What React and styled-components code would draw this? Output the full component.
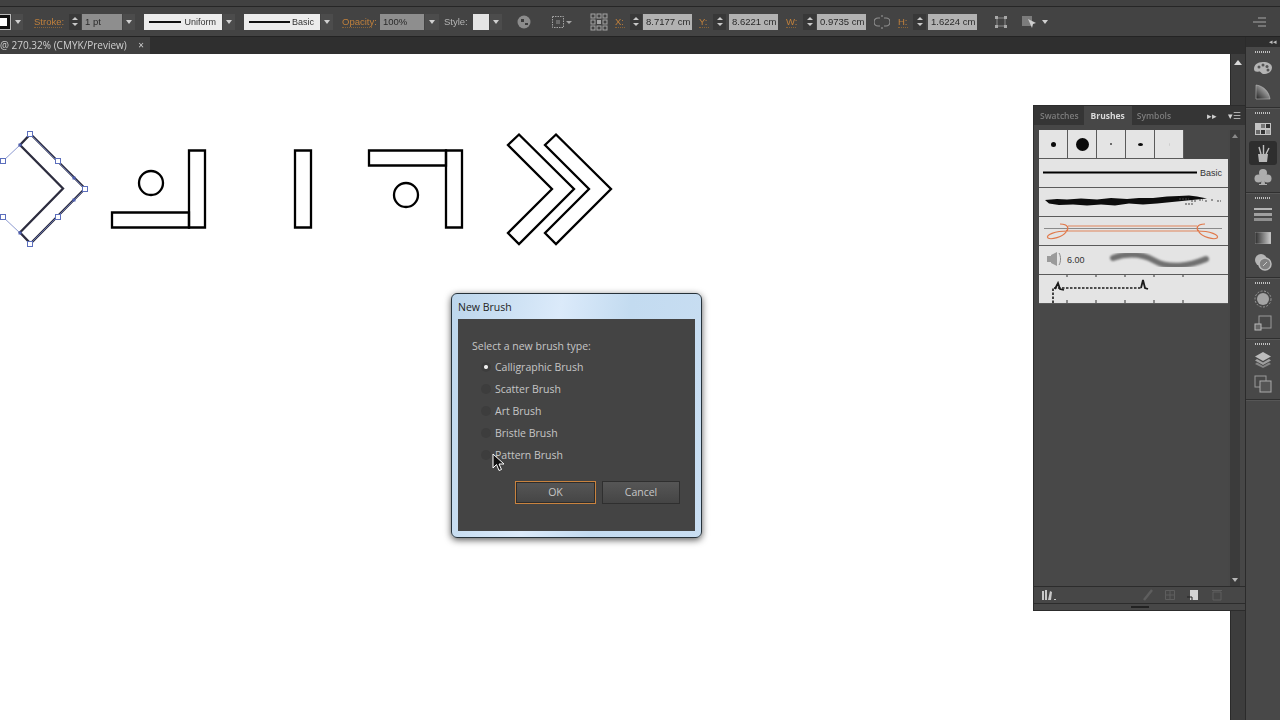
import React from 'react';
import styled, { createGlobalStyle } from 'styled-components';

const GlobalStyle = createGlobalStyle`
	html, body {
		margin: 0;
		padding: 0;
		background: #fff;
	}
	body {
		font-family: "Open Sans", "Liberation Sans", sans-serif;
		overflow: hidden;
	}
`;

const Page = styled.div`
	position: relative;
	width: 1280px;
	height: 720px;
	overflow: hidden;
	display: flex;
	flex-direction: column;
`;

const TopStrip = styled.div`
	height: 6px;
	background: #414141;
	border-bottom: 1px solid #262626;
	filter: blur(0.4px);
`;

const ControlBar = styled.div`
	height: 29px;
	display: flex;
	align-items: center;
	background: #434343;
	border-bottom: 1px solid #232323;
	filter: blur(0.5px);
`;

const Label = styled.span`
	width: ${p => p.$w}px;
	margin-left: ${p => p.$ml}px;
	color: ${p => p.$plain ? '#b5b5b5' : '#c0803c'};
	font-family: "Liberation Sans", sans-serif;
	font-size: 9.5px;
	white-space: nowrap;
	border-bottom: ${p => p.$plain ? 'none' : '1px dotted #8a6336'};
	line-height: 11px;
`;

const Field = styled.div`
	width: ${p => p.$w}px;
	margin-left: ${p => p.$ml}px;
	height: 16px;
	line-height: 16px;
	padding-left: 3px;
	box-sizing: border-box;
	font-family: "Liberation Sans", sans-serif;
	font-size: 9.5px;
	color: #2a2a2a;
	white-space: nowrap;
	background: ${p => p.$light ? '#b2b2b2' : '#8e8e8e'};
`;

const Spinner = styled.div`
	width: ${p => p.$w || 12}px;
	margin-left: ${p => p.$ml}px;
	height: 16px;
	background: #383838;
	display: flex;
	flex-direction: column;
	align-items: center;
	justify-content: space-evenly;

	&::before, &::after {
		content: "";
		border-left: 3px solid transparent;
		border-right: 3px solid transparent;
	}
	&::before { border-bottom: 3px solid #c8c8c8; }
	&::after { border-top: 3px solid #c8c8c8; }
`;

const Drop = styled.div`
	width: ${p => p.$w || 12}px;
	margin-left: ${p => p.$ml}px;
	height: 16px;
	background: ${p => p.$bare ? 'transparent' : '#4c4c4c'};
	display: flex;
	align-items: center;
	justify-content: center;

	&::after {
		content: "";
		border-left: 3px solid transparent;
		border-right: 3px solid transparent;
		border-top: 4px solid #d0d0d0;
	}
`;

const FillSwatch = styled.div`
	width: 10px;
	height: 14px;
	box-sizing: border-box;
	background: #fff;
	border: 3px solid #111;
	border-left: 0;
	outline: 1px solid #bbb;
`;

const StrokePicker = styled.div`
	width: ${p => p.$w}px;
	margin-left: ${p => p.$ml}px;
	height: 16px;
	box-sizing: border-box;
	padding: 0 6px 0 5px;
	background: #ececec;
	display: flex;
	align-items: center;
	justify-content: space-between;
	font-family: "Liberation Sans", sans-serif;
	font-size: 9px;
	color: #333;

	&::before {
		content: "";
		width: ${p => p.$line}px;
		height: 2px;
		background: #111;
	}
`;

const StyleSwatch = styled.div`
	width: 16px;
	height: 16px;
	margin-left: ${p => p.$ml}px;
	background: #e4e4e4;
`;

const BarIcon = styled.svg`
	flex: none;
	margin-left: ${p => p.$ml}px;
`;

const MenuIcon = styled.svg`
	margin-left: auto;
	margin-right: 14px;
`;

const Workspace = styled.div`
	flex: 1;
	display: flex;
	min-height: 0;
`;

const DocColumn = styled.div`
	flex: 1;
	display: flex;
	flex-direction: column;
`;

const TabBar = styled.div`
	height: 17px;
	background: #2f2f2f;
	display: flex;
	filter: blur(0.3px);
`;

const DocTab = styled.div`
	width: 150px;
	background: #404040;
	color: #cfcfcf;
	font-size: 10px;
	line-height: 17px;
	display: flex;
	justify-content: space-between;
	padding-right: 6px;
	box-sizing: border-box;
	white-space: nowrap;
`;

const CanvasRow = styled.div`
	flex: 1;
	display: flex;
	min-height: 0;
`;

const Canvas = styled.div`
	flex: 1;
	background: #fff;
	padding-top: 71px;
`;

const Artwork = styled.svg`
	display: block;
	filter: blur(0.25px);
`;

const PageScroll = styled.div`
	width: 15px;
	background: #3d3d3d;
	border-left: 1px solid #2a2a2a;
	box-sizing: border-box;
	display: flex;
	justify-content: center;
	padding-top: 6px;

	&::before {
		content: "";
		height: 0;
		border-left: 4px solid transparent;
		border-right: 4px solid transparent;
		border-bottom: 5px solid #d8d8d8;
	}
`;

const Dock = styled.div`
	width: 35px;
	background: #484848;
	border-left: 1px solid #2b2b2b;
	box-sizing: border-box;
	filter: blur(0.4px);
`;

const DockHead = styled.div`
	height: 10px;
	background: #2f2f2f;
	color: #bdbdbd;
	font-size: 7px;
	line-height: 10px;
	text-align: right;
	padding-right: 3px;
`;

const DockSection = styled.div`
	padding: 4px 0 3px;
	border-bottom: 1px solid #2f2f2f;
	box-shadow: 0 1px 0 #565656;
`;

const Grip = styled.div`
	width: 16px;
	height: 2px;
	margin: 0 auto 3px;
	background: repeating-linear-gradient(90deg, #c0c0c0 0 1px, transparent 1px 2px);
`;

const DockSlot = styled.div`
	height: 24px;
	display: flex;
	align-items: center;
	justify-content: center;
	margin: 0 3px;
	border-radius: 3px;
	background: ${p => p.$on ? '#2e2e2e' : 'transparent'};
`;

const Panel = styled.div`
	position: absolute;
	left: 1033px;
	top: 105px;
	width: 212px;
	height: 506px;
	display: flex;
	flex-direction: column;
	background: #474747;
	border: 1px solid #2c2c2c;
	border-right: 0;
	box-sizing: border-box;
`;

const PanelHead = styled.div`
	height: 19px;
	flex: none;
	background: #353535;
	display: flex;
	align-items: stretch;
	padding-left: 1px;
	font-size: 8.5px;
	line-height: 19px;
	filter: blur(0.3px);
`;

const PanelTab = styled.div`
	padding: 0 ${p => p.$on ? 7 : 5}px;
	color: ${p => p.$on ? '#dadada' : '#7d7d7d'};
	font-weight: ${p => p.$on ? 700 : 600};
	background: ${p => p.$on ? '#474747' : 'transparent'};
	white-space: nowrap;
`;

const PanelMenu = styled.div`
	margin-left: auto;
	display: flex;
	align-items: center;
	gap: 11px;
	padding-right: 4px;
	color: #d0d0d0;
	font-size: 9px;
`;

const PanelBody = styled.div`
	flex: 1;
	display: flex;
	padding: 5px 5px 0;
	min-height: 0;
	border-bottom: 1px solid #2c2c2c;
`;

const BrushList = styled.div`
	width: 189px;
	background: #484848;
`;

const ThumbRow = styled.div`
	display: flex;
	height: 29px;
`;

const Thumb = styled.div`
	width: 29px;
	box-sizing: border-box;
	background: #e4e4e4;
	border-right: 1px solid #5a5a5a;
	border-bottom: 1px solid #5a5a5a;
	display: flex;
	align-items: center;
	justify-content: center;

	&::after {
		content: "";
		width: ${p => p.$w}px;
		height: ${p => p.$h}px;
		border-radius: 50%;
		background: ${p => p.$c || '#0a0a0a'};
	}
`;

const BrushRow = styled.div`
	position: relative;
	height: 29px;
	box-sizing: border-box;
	background: #e4e4e4;
	border-bottom: 1px solid #5a5a5a;
	color: #333;
	font-family: "Liberation Sans", sans-serif;
	font-size: 9px;
	line-height: 28px;
`;

const RowArt = styled.svg`
	display: block;
`;

const BasicName = styled.span`
	position: absolute;
	right: 6px;
	top: 0;
`;

const SizeName = styled.span`
	position: absolute;
	left: 28px;
	top: 0;
`;

const ListScroll = styled.div`
	width: 10px;
	margin-left: 2px;
	background: #3b3b3b;
	display: flex;
	flex-direction: column;
	align-items: center;
	justify-content: space-between;
	padding: 4px 0;
	box-sizing: border-box;

	&::before, &::after {
		content: "";
		border-left: 3px solid transparent;
		border-right: 3px solid transparent;
	}
	&::before { border-bottom: 4px solid #8a8a8a; }
	&::after { border-top: 4px solid #b8b8b8; }
`;

const PanelFoot = styled.div`
	height: 16px;
	flex: none;
	display: flex;
	align-items: center;
	padding: 0 7px;
	border-bottom: 1px solid #2c2c2c;
`;

const FootIcon = styled.svg`
	margin-left: ${p => p.$ml}px;
	flex: none;
`;

const ResizeBar = styled.div`
	height: 6px;
	flex: none;
	display: flex;
	align-items: center;
	justify-content: center;

	&::after {
		content: "";
		width: 18px;
		height: 2px;
		background: #222;
	}
`;

const Dialog = styled.div`
	position: absolute;
	left: 451px;
	top: 293px;
	width: 251px;
	height: 245px;
	box-sizing: border-box;
	padding: 0 6px 6px;
	display: flex;
	flex-direction: column;
	border: 1px solid #26323a;
	border-radius: 6px;
	background: linear-gradient(100deg, #bcd6ec 0%, #dbeafa 38%, #c3dbf0 62%, #c9def2 100%);
	box-shadow: 0 2px 7px rgba(0, 0, 0, 0.65);
`;

const DialogTitle = styled.div`
	height: 25px;
	line-height: 26px;
	font-size: 10.5px;
	color: #1d1d1d;
	flex: none;
`;

const DialogBody = styled.div`
	flex: 1;
	background: #444;
	color: #c6c6c6;
	font-size: 10.5px;
	padding-top: 20px;
	display: flex;
	flex-direction: column;
`;

const Prompt = styled.div`
	margin-left: 14px;
	height: 14px;
	line-height: 14px;
	margin-bottom: 3px;
`;

const RadioRow = styled.div`
	height: 22px;
	display: flex;
	align-items: center;
	gap: 4px;
	padding-left: 23px;
`;

const Radio = styled.span`
	width: 10px;
	height: 10px;
	border-radius: 50%;
	background: ${p => p.$on ? 'radial-gradient(circle, #eee 0 1.5px, #3d3d3d 2.5px)' : '#3d3d3d'};
`;

const ButtonRow = styled.div`
	display: flex;
	justify-content: flex-end;
	gap: 6px;
	padding-right: 15px;
	margin-top: 15px;
`;

const DialogButton = styled.div`
	width: ${p => p.$w}px;
	height: 23px;
	box-sizing: border-box;
	line-height: 21px;
	text-align: center;
	color: #c6c6c6;
	background: linear-gradient(#565656, #454545);
	border: 1px solid ${p => p.$primary ? '#c9833f' : '#2f2f2f'};
	box-shadow: ${p => p.$primary ? 'inset 0 0 0 1px #2c2c2c' : 'none'};
`;

const Cursor = styled.svg`
	position: absolute;
	left: 40px;
	top: 159px;
`;

const barDot = '#a4a4a4';

const dockSections = [
	['palette', 'curve'],
	['swatches', 'brushes', 'club'],
	['lines', 'gradient', 'rings'],
	['halo', 'frames'],
	['layers', 'copies'],
];

const brushTypes = ['Calligraphic Brush', 'Scatter Brush', 'Art Brush', 'Bristle Brush', 'Pattern Brush'];

function DockGlyph({ name }) {
	switch (name) {
		case 'palette':
			return (
				<svg width="20" height="16" viewBox="0 0 20 16">
					<path d="M10 2C4 2 1 5 1 9c0 3 3 3 5 2.5 2-.5 2 3 6 2.500 4-.5 7-3 7-6.500C19 4 15 2 10 2z" fill="#b4b4b4" />
					<circle cx="6" cy="7" r="1.5" fill="#555" />
					<circle cx="10" cy="5" r="1.5" fill="#555" />
					<circle cx="14" cy="6.5" r="1.5" fill="#555" />
					<circle cx="15" cy="10" r="1.5" fill="#555" />
				</svg>
			);
		case 'curve':
			return (
				<svg width="18" height="18" viewBox="0 0 18 18">
					<defs>
						<linearGradient id="curveFill" x1="0" y1="1" x2="1" y2="0">
							<stop offset="0" stopColor="#222" />
							<stop offset="1" stopColor="#ddd" />
						</linearGradient>
					</defs>
					<path d="M2 2C10 3 15 9 16 16H2z" fill="url(#curveFill)" stroke="#bbb" strokeWidth=".6" />
				</svg>
			);
		case 'swatches':
			return (
				<svg width="16" height="12" viewBox="0 0 16 12">
					<rect width="16" height="12" fill="#c4c4c4" />
					<rect x="6" y="1" width="4" height="4" fill="#777" />
					<rect x="11" y="1" width="4" height="4" fill="#333" />
					<rect x="1" y="7" width="4" height="4" fill="#666" />
					<rect x="6" y="7" width="4" height="4" fill="#333" />
					<rect x="11" y="7" width="4" height="4" fill="#999" />
				</svg>
			);
		case 'brushes':
			return (
				<svg width="18" height="20" viewBox="0 0 18 20">
					<path d="M4 11h10l-1 8H5z" fill="#b8b8b8" />
					<path d="M7 11 5 4M9.500 11V2M12 11l3-6" stroke="#c0c0c0" strokeWidth="1.400" fill="none" />
				</svg>
			);
		case 'club':
			return (
				<svg width="18" height="18" viewBox="0 0 18 18">
					<circle cx="9" cy="5" r="4" fill="#adadad" />
					<circle cx="4.5" cy="10.5" r="4" fill="#adadad" />
					<circle cx="13.5" cy="10.5" r="4" fill="#adadad" />
					<path d="M8 8h2l1 8h2v1H5v-1h2z" fill="#adadad" />
				</svg>
			);
		case 'lines':
			return (
				<svg width="18" height="13" viewBox="0 0 18 13">
					<rect y="0" width="18" height="2" fill="#b4b4b4" />
					<rect y="5" width="18" height="3" fill="#a0a0a0" />
					<rect y="10" width="18" height="3" fill="#909090" />
				</svg>
			);
		case 'gradient':
			return (
				<svg width="16" height="12" viewBox="0 0 16 12">
					<defs>
						<linearGradient id="barFill">
							<stop offset="0" stopColor="#2c2c2c" />
							<stop offset="1" stopColor="#d0d0d0" />
						</linearGradient>
					</defs>
					<rect width="16" height="12" fill="url(#barFill)" stroke="#aaa" strokeWidth=".6" />
				</svg>
			);
		case 'rings':
			return (
				<svg width="18" height="18" viewBox="0 0 18 18">
					<circle cx="7" cy="7" r="6" fill="#b4b4b4" />
					<circle cx="11" cy="11" r="6" fill="#808080" stroke="#bbb" strokeWidth="1.5" />
					<path d="M9 13l4-4" stroke="#ccc" strokeWidth="1" />
				</svg>
			);
		case 'halo':
			return (
				<svg width="18" height="18" viewBox="0 0 18 18">
					<circle cx="9" cy="9" r="6" fill="#a4a4a4" />
					<circle cx="9" cy="9" r="8" fill="none" stroke="#999" strokeWidth="1" strokeDasharray="2 1.5" />
				</svg>
			);
		case 'frames':
			return (
				<svg width="18" height="18" viewBox="0 0 18 18">
					<rect x="5" y="2" width="12" height="12" fill="none" stroke="#999" />
					<rect x="1" y="10" width="6" height="6" fill="#666" stroke="#bbb" />
				</svg>
			);
		case 'layers':
			return (
				<svg width="18" height="16" viewBox="0 0 18 16">
					<path d="M9 0l8 4.5-8 4.5-8-4.500z" fill="#bcbcbc" />
					<path d="M3 7l6 3.5L15 7l2 1.5L9 13 1 8.500z" fill="#a0a0a0" />
					<path d="M3 10.500l6 3.5 6-3.500 2 1.5-8 4-8-4z" fill="#858585" />
				</svg>
			);
		case 'copies':
			return (
				<svg width="18" height="18" viewBox="0 0 18 18">
					<rect x="1" y="1" width="11" height="11" fill="none" stroke="#999" />
					<rect x="6" y="6" width="11" height="11" fill="#555" stroke="#aaa" />
				</svg>
			);
		default:
			return null;
	}
}

function ShapeArt() {
	const handles = [[30, 134], [85, 189], [30, 244], [3, 161], [3, 217], [58, 161], [58, 217]];
	const nodes = [[20, 145], [20, 233], [74, 178], [74, 200]];
	return (
		<Artwork width="640" height="125" viewBox="0 125 640 125">
			<g fill="none" stroke="#000" strokeWidth="2.3">
				<path d="M112 212.500h77v15h-77z" />
				<path d="M189 150.500h16v77h-16z" />
				<circle cx="151" cy="183" r="12" />
				<path d="M295 150.500h16v77h-16z" />
				<path d="M369 150.500h77v15h-77z" />
				<path d="M446 150.500h16v77h-16z" />
				<circle cx="406" cy="195" r="12" />
				<path d="M519 134.500 574 189 519 244 508 233 552 189 508 145z" />
				<path d="M556 134.500 611 189 556 244 545 233 589 189 545 145z" />
			</g>
			<path d="M30.500 134 85 188.500 30.500 243.500 20 232.500 63 188.500 20 145z" fill="none" stroke="#2d2d3f" strokeWidth="2.3" />
			<g stroke="#6f7fc4" strokeWidth="1" fill="none">
				<path d="M20 145 3 161M20 233 3 217M30 134 85 189 30 244" opacity=".8" />
			</g>
			{handles.map(([x, y]) => (
				<rect key={`${x}-${y}`} x={x - 2.5} y={y - 2.5} width="5" height="5" fill="#fff" stroke="#5c6fbd" />
			))}
			{nodes.map(([x, y]) => (
				<rect key={`${x}-${y}`} x={x - 1.5} y={y - 1.5} width="3" height="3" fill="#4e5fb0" />
			))}
		</Artwork>
	);
}

function CharcoalBrush() {
	return (
		<RowArt width="188" height="28" viewBox="0 0 188 28">
			<path d="M6 12l12-1 10 .5 14-1 16 1 14-1.5 16 1 12-1 14 0 14-1.5 12-.5 10-.5 8 1 10 2-10 1-10 1-10 1-10 1-10 1-14 1-14-1-14 2-14-1-14 1-14-1-14 .5-10-1.500z" fill="#0c0c0c" />
			<path d="M140 11h10M152 13h6M146 16h8M160 12h4M166 13h3M172 12h2M178 13h4" stroke="#444" strokeWidth="1.2" strokeDasharray="2 1" />
		</RowArt>
	);
}

function ArtBrush() {
	return (
		<RowArt width="188" height="28" viewBox="0 0 188 28">
			<path d="M5 11.500h178" stroke="#8a8a8a" strokeWidth="1" />
			<path d="M29 9h129M29 14h129" stroke="#e0845a" strokeWidth="1.2" />
			<path d="M21 7c9 0 9 5 6 8-3 5-15 8-18 6-3-3 7-7 20-7" fill="none" stroke="#e0784a" strokeWidth="1.2" />
			<path d="M166 7c-9 0-9 5-6 8 3 5 15 8 18 6 3-3-7-7-20-7" fill="none" stroke="#e0784a" strokeWidth="1.2" />
		</RowArt>
	);
}

function BristleBrush() {
	return (
		<RowArt width="188" height="28" viewBox="0 0 188 28">
			<defs>
				<filter id="soft"><feGaussianBlur stdDeviation="1.3" /></filter>
			</defs>
			<path d="M12 9l6-3v14l-6-3zM8 10h4v6H8z" fill="#9a9a9a" />
			<path d="M20 7c2 3 2 9 0 12" fill="none" stroke="#888" />
			<path d="M74 12C88 7 102 7 116 15S150 20 167 13" fill="none" stroke="#6f6f6f" strokeWidth="6" strokeLinecap="round" filter="url(#soft)" />
		</RowArt>
	);
}

function PatternBrush() {
	const ticks = [28, 57, 86, 115, 144];
	return (
		<RowArt width="188" height="28" viewBox="0 0 188 28">
			{ticks.map(x => (
				<path key={x} d={`M${x} 0v2M${x} 25v3`} stroke="#333" strokeWidth="1" />
			))}
			<path d="M14 28V13h88" fill="none" stroke="#1a1a1a" strokeWidth="1.6" strokeDasharray="2.5 1.5" />
			<path d="M16 14l3-6 2 6 4 1M102 13l2-8 2 8 3 1" fill="none" stroke="#1a1a1a" strokeWidth="1.8" />
		</RowArt>
	);
}

function App() {
	return (
		<Page>
			<GlobalStyle />
			<TopStrip />
			<ControlBar>
				<FillSwatch />
				<Drop $w={11} $ml={2} />
				<Label $w={28} $ml={11}>Stroke:</Label>
				<Spinner $ml={7} />
				<Field $w={40} $ml={1}>1 pt</Field>
				<Drop $ml={1} />
				<StrokePicker $w={78} $ml={9} $line={32}>Uniform</StrokePicker>
				<Drop $ml={1} />
				<StrokePicker $w={76} $ml={9} $line={41}>Basic</StrokePicker>
				<Drop $ml={1} />
				<Label $w={30} $ml={9}>Opacity:</Label>
				<Field $w={44} $ml={8}>100%</Field>
				<Drop $w={14} $ml={1} />
				<Label $w={21} $ml={5} $plain>Style:</Label>
				<StyleSwatch $ml={8} />
				<Drop $ml={1} />
				<BarIcon $ml={14} width="16" height="16" viewBox="0 0 16 16">
					<circle cx="8" cy="8" r="6.5" fill="#8c8c8c" />
					<path d="M5 5h3v3H5zM9 9h3v2H9z" fill="#3c3c3c" />
				</BarIcon>
				<BarIcon $ml={20} width="20" height="16" viewBox="0 0 20 16">
					<rect x=".5" y="2.5" width="11" height="11" fill="none" stroke={barDot} strokeDasharray="1.5 1" />
					<rect x="4" y="6" width="4" height="4" fill="#6a6a6a" />
					<path d="M14 7h6l-3 3z" fill={barDot} />
				</BarIcon>
				<BarIcon $ml={18} width="18" height="18" viewBox="0 0 18 18">
					<g fill="none" stroke={barDot}>
						<rect x="1" y="1" width="4" height="4" />
						<rect x="7" y="1" width="4" height="4" />
						<rect x="13" y="1" width="4" height="4" />
						<rect x="1" y="7" width="4" height="4" />
						<rect x="13" y="7" width="4" height="4" />
						<rect x="1" y="13" width="4" height="4" />
						<rect x="7" y="13" width="4" height="4" />
						<rect x="13" y="13" width="4" height="4" />
					</g>
					<rect x="7" y="7" width="4" height="4" fill={barDot} />
				</BarIcon>
				<Label $w={10} $ml={7}>X:</Label>
				<Spinner $ml={5} />
				<Field $w={49} $ml={1} $light>8.7177 cm</Field>
				<Label $w={10} $ml={7}>Y:</Label>
				<Spinner $w={13} $ml={4} />
				<Field $w={49} $ml={3} $light>8.6221 cm</Field>
				<Label $w={10} $ml={8}>W:</Label>
				<Spinner $w={13} $ml={7} />
				<Field $w={49} $ml={1} $light>0.9735 cm</Field>
				<BarIcon $ml={8} width="16" height="14" viewBox="0 0 16 14">
					<path d="M6 3H4a4 4 0 0 0 0 8h2M10 3h2a4 4 0 0 1 0 8h-2M8 0v2M8 12v2" fill="none" stroke="#8f8f8f" strokeWidth="1.2" />
				</BarIcon>
				<Label $w={10} $ml={8}>H:</Label>
				<Spinner $w={13} $ml={5} />
				<Field $w={49} $ml={2} $light>1.6224 cm</Field>
				<BarIcon $ml={18} width="12" height="12" viewBox="0 0 12 12">
					<rect x="2" y="2" width="8" height="8" fill="none" stroke="#8c8c8c" />
					<path d="M0 0h3v3H0zM9 0h3v3H9zM0 9h3v3H0zM9 9h3v3H9z" fill="#a8a8a8" />
				</BarIcon>
				<BarIcon $ml={15} width="14" height="16" viewBox="0 0 14 16">
					<rect x="0" y="2" width="10" height="10" fill="#7c7c7c" />
					<path d="M6 5l8 4-3 1-1 4z" fill="#cecece" />
				</BarIcon>
				<Drop $w={8} $ml={5} $bare />
				<MenuIcon width="13" height="10" viewBox="0 0 13 10">
					<path d="M5 1h8M0 5h13M5 9h8" stroke="#a8a8a8" strokeWidth="1" />
				</MenuIcon>
			</ControlBar>
			<Workspace>
				<DocColumn>
					<TabBar>
						<DocTab>
							<span>@ 270.32% (CMYK/Preview)</span>
							<span>×</span>
						</DocTab>
					</TabBar>
					<CanvasRow>
						<Canvas>
							<ShapeArt />
						</Canvas>
						<PageScroll />
					</CanvasRow>
				</DocColumn>
				<Dock>
					<DockHead>◂◂</DockHead>
					{dockSections.map(section => (
						<DockSection key={section[0]}>
							<Grip />
							{section.map(name => (
								<DockSlot key={name} $on={name === 'brushes'}>
									<DockGlyph name={name} />
								</DockSlot>
							))}
						</DockSection>
					))}
				</Dock>
			</Workspace>

			<Panel>
				<PanelHead>
					<PanelTab>Swatches</PanelTab>
					<PanelTab $on>Brushes</PanelTab>
					<PanelTab>Symbols</PanelTab>
					<PanelMenu>
						<span>▸▸</span>
						<span>▾☰</span>
					</PanelMenu>
				</PanelHead>
				<PanelBody>
					<BrushList>
						<ThumbRow>
							<Thumb $w={5} $h={5} />
							<Thumb $w={13} $h={13} />
							<Thumb $w={2} $h={2} $c="#444" />
							<Thumb $w={5} $h={3} />
							<Thumb $w={1} $h={3} $c="#ccc" />
						</ThumbRow>
						<BrushRow>
							<RowArt width="188" height="28" viewBox="0 0 188 28">
								<path d="M4 13.5h154" stroke="#000" strokeWidth="2" />
							</RowArt>
							<BasicName>Basic</BasicName>
						</BrushRow>
						<BrushRow>
							<CharcoalBrush />
						</BrushRow>
						<BrushRow>
							<ArtBrush />
						</BrushRow>
						<BrushRow>
							<BristleBrush />
							<SizeName>6.00</SizeName>
						</BrushRow>
						<BrushRow>
							<PatternBrush />
						</BrushRow>
					</BrushList>
					<ListScroll />
				</PanelBody>
				<PanelFoot>
					<FootIcon $ml={0} width="16" height="12" viewBox="0 0 16 12">
						<path d="M1 11V2h2v9zM4 11V1h2v10zM7 11l2-9 2 1-1 8zM13 10h2v1h-2z" fill="#c8c8c8" />
					</FootIcon>
					<FootIcon $ml={85} width="12" height="12" viewBox="0 0 12 12">
						<path d="M2 11 10 1" stroke="#5e5e5e" strokeWidth="2.5" />
					</FootIcon>
					<FootIcon $ml={10} width="12" height="12" viewBox="0 0 12 12">
						<path d="M1.5 1.5h9v9h-9zM1.5 6h9M6 1.5v9" fill="none" stroke="#5e5e5e" />
					</FootIcon>
					<FootIcon $ml={11} width="12" height="12" viewBox="0 0 12 12">
						<path d="M3 1h8v10H3z" fill="#d4d4d4" />
						<path d="M0 8h5v3" fill="none" stroke="#222" />
					</FootIcon>
					<FootIcon $ml={12} width="12" height="12" viewBox="0 0 12 12">
						<path d="M2 3h8v8H2zM1 1.5h10" fill="none" stroke="#5e5e5e" />
					</FootIcon>
				</PanelFoot>
				<ResizeBar />
			</Panel>

			<Dialog>
				<DialogTitle>New Brush</DialogTitle>
				<DialogBody>
					<Prompt>Select a new brush type:</Prompt>
					{brushTypes.map((name, i) => (
						<RadioRow key={name}>
							<Radio $on={i === 0} />
							<span>{name}</span>
						</RadioRow>
					))}
					<ButtonRow>
						<DialogButton $w={81} $primary>OK</DialogButton>
						<DialogButton $w={78}>Cancel</DialogButton>
					</ButtonRow>
				</DialogBody>
				<Cursor width="13" height="18" viewBox="0 0 13 18">
					<path d="M1 1v14l3.5-3.5 2.5 6 2.5-1-2.5-5.500H12z" fill="#111" stroke="#fff" strokeWidth="1" />
				</Cursor>
			</Dialog>
		</Page>
	);
}

export default App;
